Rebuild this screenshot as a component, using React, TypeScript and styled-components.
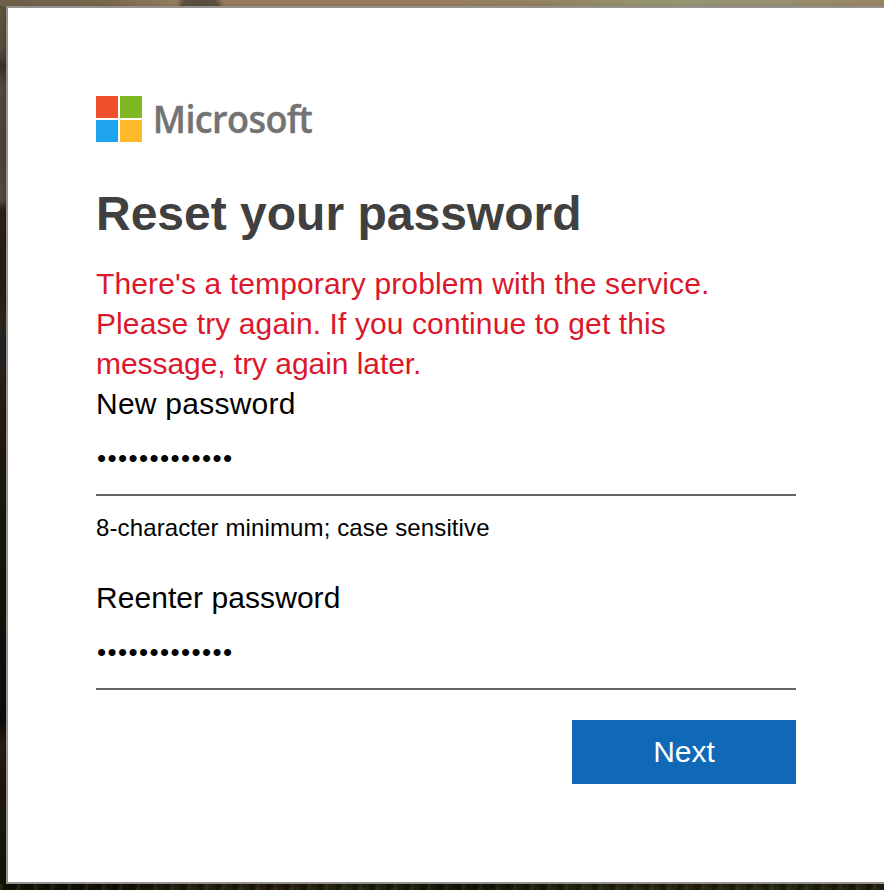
import React, { useState } from "react";
import styled, { createGlobalStyle } from "styled-components";

const GlobalStyle = createGlobalStyle`
  *, *::before, *::after { box-sizing: border-box; }
  body {
    margin: 0;
    overflow: hidden;
    background: #14120c;
    font-family: "Liberation Sans", Arial, sans-serif;
  }
`;

const Backdrop = styled.main`
  width: 100vw;
  height: 100vh;
  padding: 6px 0 6px 6px;
  overflow: hidden;
  background:
    radial-gradient(ellipse 24px 16px at 200px 6px, #5b4f3f 70%, transparent) 0 0 / 100% 6px no-repeat,
    linear-gradient(90deg, #6f5f4a 0, #79674f 110px, #957d60 175px, #957a5c 240px, #98795b 370px, #967f60 480px, #938465 560px, #97956d 640px, #979572 690px, #989170 780px, #9b8464 884px) 0 0 / 100% 6px no-repeat,
    repeating-linear-gradient(97deg, rgba(80, 74, 28, 0.35) 0 2px, transparent 4px 9px, rgba(0, 8, 0, 0.4) 11px 13px, transparent 17px) 0 100% / 100% 6px no-repeat,
    linear-gradient(90deg, #12130a 0, #16110c 120px, #262412 200px, #29200f 280px, #252711 360px, #14170c 470px, #292b12 590px, #2d2611 700px, #292b12 780px, #252112 884px) 0 100% / 100% 6px no-repeat,
    linear-gradient(180deg, #65553f 0, #594b3c 50px, #3b3027 66px, #54493a 85px, #4b4436 150px, #504c3e 200px, #29221c 210px, #231d18 290px, #2c251f 320px, #252322 350px, #2a1d15 400px, #1f1a11 450px, #17170e 540px, #12130d 620px, #0d0e0a 720px, #2c1b14 745px, #20150e 785px, #1a1a0d 820px, #111409 890px);
`;

const Dialog = styled.section`
  width: 884px;
  height: 878px;
  padding: 88px 86px 0 88px;
  border: 2px solid #969290;
  background: #fff;
  box-shadow: 0 2px 6px rgba(0, 0, 0, 0.25);
`;

const Brand = styled.div`
  display: flex;
  height: 46px;
`;

const Logo = styled.svg`
  display: block;
  width: 218px;
  height: 46px;
  overflow: visible;
`;

const Wordmark = styled.text`
  font: 600 38px "Open Sans", sans-serif;
  fill: #737373;
  stroke: #737373;
  stroke-width: 0.35px;
`;

const Form = styled.form`
  width: 700px;
`;

const Title = styled.h1`
  margin: 44px 0 22px;
  font-size: 48px;
  line-height: 56px;
  font-weight: 700;
  color: #404040;
  white-space: nowrap;
`;

const ErrorMessage = styled.p`
  margin: 0;
  font-size: 30px;
  line-height: 40px;
  color: #dc172b;
`;

const ErrorLine = styled.span<{ $tracking: number }>`
  display: block;
  white-space: nowrap;
  letter-spacing: ${({ $tracking }) => $tracking}px;
`;

const Field = styled.div`
  display: flex;
  flex-direction: column;
  align-items: flex-start;
`;

const Label = styled.label<{ $tracking: number }>`
  font-size: 30px;
  line-height: 40px;
  letter-spacing: ${({ $tracking }) => $tracking}px;
  color: #000;
`;

const PasswordInput = styled.input`
  width: 100%;
  height: 72px;
  padding: 0 0 1px 1px;
  border: 0;
  border-bottom: 2px solid #666;
  border-radius: 0;
  outline: 0;
  background: transparent;
  color: #000;
  font: 26px "Liberation Sans", Arial, sans-serif;
  letter-spacing: 1.4px;
`;

const Hint = styled.p`
  height: 32px;
  margin: 16px 0 34px;
  font-size: 24px;
  line-height: 32px;
  letter-spacing: 0.12px;
  color: #000;
`;

const Actions = styled.div`
  display: flex;
  justify-content: flex-end;
  margin-top: 30px;
`;

const NextButton = styled.button`
  width: 224px;
  height: 64px;
  padding: 0;
  border: 0;
  background: #1069b7;
  color: #fff;
  font: 30px "Liberation Sans", Arial, sans-serif;
`;

const errorLines = [
  { text: "There's a temporary problem with the service.", tracking: 0.13 },
  { text: "Please try again. If you continue to get this", tracking: 0.1 },
  { text: "message, try again later.", tracking: -0.06 },
];

export default function App() {
  const [password, setPassword] = useState("abcdefghijklm");
  const [confirmation, setConfirmation] = useState("abcdefghijklm");

  return (
    <>
      <GlobalStyle />
      <Backdrop>
        <Dialog>
          <Brand>
            <Logo viewBox="0 0 218 46" aria-label="Microsoft">
              <rect width="22" height="22" fill="#f1502f" />
              <rect x="24" width="22" height="22" fill="#80b823" />
              <rect y="24" width="22" height="22" fill="#1ea4ec" />
              <rect x="24" y="24" width="22" height="22" fill="#fdb82b" />
              <Wordmark transform="translate(56.8 37) scale(0.949 1)" letterSpacing="-0.65">
                Microsof<tspan dx="-0.8">t</tspan>
              </Wordmark>
            </Logo>
          </Brand>
          <Form onSubmit={(event) => event.preventDefault()}>
            <Title>Reset your password</Title>
            <ErrorMessage role="alert">
              {errorLines.map(({ text, tracking }) => (
                <ErrorLine key={text} $tracking={tracking}>{text}</ErrorLine>
              ))}
            </ErrorMessage>
            <Field>
              <Label htmlFor="new-password" $tracking={0.24}>New password</Label>
              <PasswordInput id="new-password" type="password" value={password} onChange={(e) => setPassword(e.target.value)} />
            </Field>
            <Hint>8-character minimum; case sensitive</Hint>
            <Field>
              <Label htmlFor="reenter-password" $tracking={0.06}>Reenter password</Label>
              <PasswordInput id="reenter-password" type="password" value={confirmation} onChange={(e) => setConfirmation(e.target.value)} />
            </Field>
            <Actions>
              <NextButton type="submit">Next</NextButton>
            </Actions>
          </Form>
        </Dialog>
      </Backdrop>
    </>
  );
}
